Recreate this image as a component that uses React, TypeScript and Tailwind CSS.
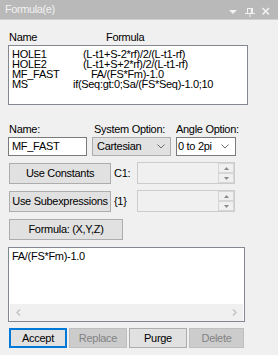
import React from "react";

function Chevron() {
  return (
    <svg width="8" height="5" viewBox="0 0 8 5" className="shrink-0">
      <polyline points="0.5,0.5 4,4 7.5,0.5" fill="none" stroke="#6d6d6d" strokeWidth="1" />
    </svg>
  );
}

function Spinner() {
  return (
    <div className="w-[98px] h-[22px] border border-[#cccccc] bg-[#f0f0f0] flex">
      <div className="flex-1" />
      <div className="w-[16px] flex flex-col">
        <div className="flex-1 border border-[#d6d6d6] bg-[#f0f0f0] flex items-center justify-center">
          <svg width="5" height="3" viewBox="0 0 5 3"><polygon points="0,3 5,3 2.5,0" fill="#8a8a8a" /></svg>
        </div>
        <div className="flex-1 border border-[#d6d6d6] bg-[#f0f0f0] flex items-center justify-center">
          <svg width="5" height="3" viewBox="0 0 5 3"><polygon points="0,0 5,0 2.5,3" fill="#8a8a8a" /></svg>
        </div>
      </div>
    </div>
  );
}

export default function App() {
  const rows: { n: string; f: string; ml: string }[] = [
    { n: "HOLE1", f: "(L-t1+S-2*rf)/2/(L-t1-rf)", ml: "ml-[10px]" },
    { n: "HOLE2", f: "(L-t1+S+2*rf)/2/(L-t1-rf)", ml: "ml-[10px]" },
    { n: "MF_FAST", f: "FA/(FS*Fm)-1.0", ml: "ml-[18px]" },
    { n: "MS", f: "if(Seq:gt:0;Sa/(FS*Seq)-1.0;10", ml: "ml-0" },
  ];
  return (
    <div className="w-[278px] h-[355px] bg-[#f0f0f0] overflow-hidden text-[11px] leading-[13px] tracking-[-0.3px] text-black font-['Liberation_Sans',Arial,sans-serif]">
      {/* title bar */}
      <div className="h-[20px] bg-[#b9b9b9] border-b border-[#cfcfcf] flex items-center pl-[5px] pr-[7px] text-[#f2f2f2]">
        <span className="tracking-[-0.4px]">Formula(e)</span>
        <svg width="44" height="19" viewBox="0 0 44 19" className="ml-auto">
          <polygon points="2,10 10,10 6,14" fill="#f2f2f2" />
          <rect x="20.5" y="8.5" width="5" height="5" fill="none" stroke="#f2f2f2" strokeWidth="1" />
          <line x1="24.5" y1="8" x2="24.5" y2="13" stroke="#f2f2f2" strokeWidth="1.4" />
          <line x1="18" y1="13.5" x2="28" y2="13.5" stroke="#f2f2f2" strokeWidth="1" />
          <line x1="23" y1="14" x2="23" y2="17" stroke="#f2f2f2" strokeWidth="1" />
          <line x1="35.5" y1="8" x2="42" y2="14.5" stroke="#f2f2f2" strokeWidth="1.6" />
          <line x1="42" y1="8" x2="35.5" y2="14.5" stroke="#f2f2f2" strokeWidth="1.6" />
        </svg>
      </div>

      <div className="px-[8px]">
        {/* header */}
        <div className="mt-[11px] h-[13px] flex pl-[1px]">
          <span className="w-[97px]">Name</span>
          <span>Formula</span>
        </div>

        {/* list */}
        <div className="mt-[1px] w-[240px] h-[60px] border border-[#828790] bg-white pt-[3px] pl-[3px] overflow-hidden">
          {rows.map((r) => (
            <div key={r.n} className="flex leading-[10px] h-[10px] whitespace-nowrap">
              <span className="w-[61px] shrink-0">{r.n}</span>
              <span className={r.ml}>{r.f}</span>
            </div>
          ))}
        </div>

        {/* options */}
        <div className="mt-[18px] flex gap-[5px]">
          <div className="w-[79px] flex flex-col gap-[1px]">
            <span className="pl-[1px]">Name:</span>
            <div className="h-[19px] border border-[#7a7a7a] bg-white flex items-center pl-[3px]">MF_FAST</div>
          </div>
          <div className="w-[79px] flex flex-col gap-[1px]">
            <span className="pl-[2px] whitespace-nowrap">System Option:</span>
            <div className="h-[19px] border border-[#adadad] bg-[#e1e1e1] flex items-center pl-[4px] pr-[5px]">
              <span className="flex-1">Cartesian</span>
              <Chevron />
            </div>
          </div>
          <div className="w-[60px] flex flex-col gap-[1px]">
            <span className="whitespace-nowrap">Angle Option:</span>
            <div className="h-[19px] border border-[#7a7a7a] bg-white flex items-center pl-[1px] pr-[6px]">
              <span className="flex-1">0 to 2pi</span>
              <Chevron />
            </div>
          </div>
        </div>

        {/* constants */}
        <div className="mt-[6px] h-[22px] flex items-end">
          <div className="ml-[1px] w-[102px] h-[21px] border border-[#adadad] bg-[#e1e1e1] flex items-center justify-center">Use Constants</div>
          <div className="w-[26px] h-[21px] flex items-center pl-[3px]">C1:</div>
          <Spinner />
        </div>

        {/* subexpressions */}
        <div className="mt-[6px] h-[22px] flex items-end">
          <div className="ml-[1px] w-[102px] h-[21px] border border-[#adadad] bg-[#e1e1e1] flex items-center justify-center whitespace-nowrap">Use Subexpressions</div>
          <div className="w-[26px] h-[21px] flex items-center pl-[3px]">{"{1}"}</div>
          <Spinner />
        </div>

        {/* formula button */}
        <div className="mt-[7px] ml-[1px] w-[114px] h-[21px] border border-[#adadad] bg-[#e1e1e1] flex items-center justify-center">Formula: (X,Y,Z)</div>

        {/* text area */}
        <div className="mt-[7px] w-[237px] h-[75px] border border-[#828790] bg-white flex flex-col">
          <div className="flex-1 pt-[2px] pl-[3px]">FA/(FS*Fm)-1.0</div>
          <div className="mx-[1px] h-[17px] bg-[#f0f0f0] flex items-center justify-between px-[6px]">
            <svg width="5" height="7" viewBox="0 0 5 7"><polyline points="4,0.5 1,3.5 4,6.5" fill="none" stroke="#c0c0c0" strokeWidth="1.3" /></svg>
            <svg width="5" height="7" viewBox="0 0 5 7"><polyline points="1,0.5 4,3.5 1,6.5" fill="none" stroke="#c0c0c0" strokeWidth="1.3" /></svg>
          </div>
        </div>

        {/* bottom buttons */}
        <div className="mt-[6px] ml-[1px] flex gap-[2px] h-[20px]">
          <div className="w-[58px] border-2 border-[#0078d7] bg-[#e1e1e1] flex items-center justify-center">Accept</div>
          <div className="w-[58px] border border-[#bfbfbf] bg-[#cccccc] text-[#838383] flex items-center justify-center">Replace</div>
          <div className="w-[58px] border border-[#adadad] bg-[#e1e1e1] flex items-center justify-center">Purge</div>
          <div className="w-[55px] border border-[#bfbfbf] bg-[#cccccc] text-[#838383] flex items-center justify-center">Delete</div>
        </div>
      </div>
    </div>
  );
}
